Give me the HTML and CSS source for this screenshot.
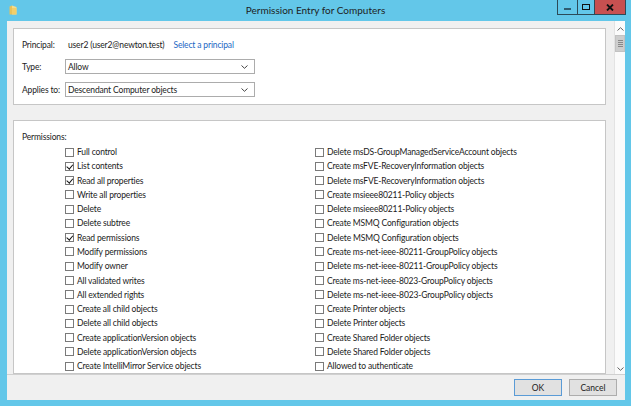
FILE: index.html
```html
<!DOCTYPE html>
<html>
<head>
<meta charset="utf-8">
<link rel="stylesheet" href="styles.css">
</head>
<body>
<div class="window">
  <div class="titlebar">
    <div class="tb-left">
      <svg class="folder" width="8" height="10" viewBox="0 0 8 10"><path d="M0.5 1.5 L3 0.5 L3 9.5 L0.5 9.5 Z" fill="#e8c25a"/><path d="M3 0.5 L7.5 2 L7.5 9.5 L3 9.5 Z" fill="#f6dc8a"/><path d="M3 3 L7.5 3 L7.5 9.5 L3 9.5 Z" fill="#f2cf6a"/></svg>
    </div>
    <div class="title">Permission Entry for Computers</div>
    <div class="controls">
      <div class="cbtn min"><span class="min-bar"></span></div>
      <div class="cbtn max"><span class="max-box"></span></div>
      <div class="cbtn close"><svg width="8" height="7" viewBox="0 0 8 7"><path d="M1 0.5 L7 6.5 M7 0.5 L1 6.5" stroke="#111" stroke-width="1.8"/></svg></div>
    </div>
  </div>
  <div class="client">
    <div class="scrollwrap">
      <div class="content">
        <div class="panel principal-panel">
          <div class="prow prow-first">
            <span class="plabel">Principal:</span>
            <span class="pvalue">user2 (user2@newton.test)</span>
            <span class="plink">Select a principal</span>
          </div>
          <div class="prow prow-type">
            <span class="plabel">Type:</span>
            <div class="select"><span>Allow</span><svg width="7" height="4" viewBox="0 0 7 4"><path d="M0.5 0.5 L3.5 3.3 L6.5 0.5" fill="none" stroke="#444" stroke-width="1"/></svg></div>
          </div>
          <div class="prow prow-applies">
            <span class="plabel">Applies to:</span>
            <div class="select"><span>Descendant Computer objects</span><svg width="7" height="4" viewBox="0 0 7 4"><path d="M0.5 0.5 L3.5 3.3 L6.5 0.5" fill="none" stroke="#444" stroke-width="1"/></svg></div>
          </div>
        </div>
        <div class="panel perms-panel">
          <div class="perms-label">Permissions:</div>
          <div class="perms-grid">
            <div class="col">
              <div class="item"><span class="cb"></span>Full control</div>
              <div class="item"><span class="cb checked"></span>List contents</div>
              <div class="item"><span class="cb checked"></span>Read all properties</div>
              <div class="item"><span class="cb"></span>Write all properties</div>
              <div class="item"><span class="cb"></span>Delete</div>
              <div class="item"><span class="cb"></span>Delete subtree</div>
              <div class="item"><span class="cb checked"></span>Read permissions</div>
              <div class="item"><span class="cb"></span>Modify permissions</div>
              <div class="item"><span class="cb"></span>Modify owner</div>
              <div class="item"><span class="cb"></span>All validated writes</div>
              <div class="item"><span class="cb"></span>All extended rights</div>
              <div class="item"><span class="cb"></span>Create all child objects</div>
              <div class="item"><span class="cb"></span>Delete all child objects</div>
              <div class="item"><span class="cb"></span>Create applicationVersion objects</div>
              <div class="item"><span class="cb"></span>Delete applicationVersion objects</div>
              <div class="item"><span class="cb"></span>Create IntelliMirror Service objects</div>
            </div>
            <div class="col">
              <div class="item"><span class="cb"></span>Delete msDS-GroupManagedServiceAccount objects</div>
              <div class="item"><span class="cb"></span>Create msFVE-RecoveryInformation objects</div>
              <div class="item"><span class="cb"></span>Delete msFVE-RecoveryInformation objects</div>
              <div class="item"><span class="cb"></span>Create msieee80211-Policy objects</div>
              <div class="item"><span class="cb"></span>Delete msieee80211-Policy objects</div>
              <div class="item"><span class="cb"></span>Create MSMQ Configuration objects</div>
              <div class="item"><span class="cb"></span>Delete MSMQ Configuration objects</div>
              <div class="item"><span class="cb"></span>Create ms-net-ieee-80211-GroupPolicy objects</div>
              <div class="item"><span class="cb"></span>Delete ms-net-ieee-80211-GroupPolicy objects</div>
              <div class="item"><span class="cb"></span>Create ms-net-ieee-8023-GroupPolicy objects</div>
              <div class="item"><span class="cb"></span>Delete ms-net-ieee-8023-GroupPolicy objects</div>
              <div class="item"><span class="cb"></span>Create Printer objects</div>
              <div class="item"><span class="cb"></span>Delete Printer objects</div>
              <div class="item"><span class="cb"></span>Create Shared Folder objects</div>
              <div class="item"><span class="cb"></span>Delete Shared Folder objects</div>
              <div class="item"><span class="cb"></span>Allowed to authenticate</div>
            </div>
          </div>
        </div>
      </div>
      <div class="scrollbar">
        <div class="sb-arrow"><svg width="7" height="4" viewBox="0 0 7 4"><path d="M0.5 3.5 L3.5 0.7 L6.5 3.5" fill="none" stroke="#606060" stroke-width="1"/></svg></div>
        <div class="sb-thumb"><span class="grip"></span><span class="grip"></span><span class="grip"></span><span class="grip"></span></div>
        <div class="sb-track"></div>
        <div class="sb-arrow"><svg width="7" height="4" viewBox="0 0 7 4"><path d="M0.5 0.5 L3.5 3.3 L6.5 0.5" fill="none" stroke="#606060" stroke-width="1"/></svg></div>
      </div>
    </div>
    <div class="footer">
      <button class="btn default">OK</button>
      <button class="btn">Cancel</button>
    </div>
  </div>
</div>
</body>
</html>
```
FILE: styles.css
```css
html, body {
  margin: 0;
  padding: 0;
}
body {
  width: 631px;
  height: 406px;
  overflow: hidden;
  font-family: Lato, "Noto Sans", sans-serif;
  font-size: 8.5px;
  letter-spacing: -0.15px;
  color: #1b1b1b;
}
.window {
  height: 406px;
  background: #63c7e9;
  display: flex;
  flex-direction: column;
  box-sizing: border-box;
}
.titlebar {
  height: 21px;
  flex: none;
  display: grid;
  grid-template-columns: 1fr auto 1fr;
}
.tb-left {
  padding: 5px 0 0 9px;
}
.folder {
  display: block;
}
.title {
  font-size: 10px;
  letter-spacing: 0;
  line-height: 21px;
  color: #1e1e1e;
}
.controls {
  justify-self: end;
  display: flex;
  margin-right: 5px;
  height: 15px;
}
.cbtn {
  box-sizing: border-box;
  height: 15px;
  border: 1px solid #2c4a58;
  border-top: none;
  display: flex;
  align-items: center;
  justify-content: center;
}
.cbtn.min {
  width: 20px;
  border-right: none;
}
.cbtn.max {
  width: 18px;
}
.cbtn.close {
  width: 31px;
  border-left: none;
  background: #c75050;
}
.min-bar {
  width: 7px;
  height: 2px;
  background: #2f5c70;
  margin-top: 4px;
}
.max-box {
  width: 6px;
  height: 4px;
  border: 1.5px solid #111;
}
.client {
  flex: 1;
  margin: 0 6px 6px 7px;
  background: #f0f0f0;
  display: flex;
  flex-direction: column;
  min-height: 0;
}
.scrollwrap {
  flex: 1;
  display: flex;
  min-height: 0;
}
.content {
  flex: 1;
  overflow: hidden;
  padding: 7px 8px 0 6px;
  display: flex;
  flex-direction: column;
  gap: 15px;
}
.panel {
  background: #fff;
  border: 1px solid #c6c6c6;
  flex: none;
}
.principal-panel {
  height: 77px;
  box-sizing: border-box;
  padding: 8px 0 0 8px;
}
.prow {
  display: flex;
  align-items: center;
  white-space: nowrap;
}
.prow-first {
  height: 16px;
}
.prow-type {
  margin-top: 6px;
}
.prow-applies {
  margin-top: 8px;
}
.plabel {
  width: 43px;
  flex: none;
}
.pvalue {
  margin-left: 3px;
}
.plink {
  margin-left: 9px;
  color: #1a66c4;
}
.select {
  box-sizing: border-box;
  width: 190px;
  height: 15px;
  border: 1px solid #acacac;
  background: #fff;
  display: flex;
  align-items: center;
  justify-content: space-between;
  padding: 0 6px 0 2px;
}
.select svg {
  display: block;
}
.perms-panel {
  padding: 9px 8px 0 8px;
}
.perms-label {
  line-height: 15px;
}
.perms-grid {
  display: grid;
  grid-template-columns: 250px 1fr;
  padding-left: 43px;
}
.item {
  height: 14.27px;
  display: flex;
  align-items: center;
  white-space: nowrap;
}
.cb {
  box-sizing: border-box;
  width: 9px;
  height: 9px;
  border: 1px solid #7a7a7a;
  background: #fff;
  margin-right: 3px;
  flex: none;
  position: relative;
}
.cb.checked::after {
  content: "";
  position: absolute;
  left: 1.5px;
  top: 0px;
  width: 2.5px;
  height: 4.5px;
  border: solid #111;
  border-width: 0 1.5px 1.5px 0;
  transform: rotate(40deg);
}
.scrollbar {
  width: 11px;
  flex: none;
  box-sizing: border-box;
  border-left: 1px solid #e3e3e3;
  background: #fbfbfb;
  display: flex;
  flex-direction: column;
  align-items: center;
  padding-top: 3px;
}
.sb-arrow {
  height: 10px;
  width: 10px;
  display: flex;
  align-items: center;
  justify-content: center;
}
.sb-thumb {
  margin-top: 1px;
  box-sizing: border-box;
  width: 10px;
  height: 17px;
  background: #cdcdcd;
  border: 1px solid #c2c2c2;
  display: flex;
  flex-direction: column;
  align-items: center;
  justify-content: center;
  gap: 1px;
}
.grip {
  width: 5px;
  height: 1px;
  background: #888;
}
.sb-track {
  flex: 1;
}
.footer {
  height: 26px;
  flex: none;
  box-sizing: border-box;
  border-top: 1px solid #d0d0d0;
  display: flex;
  justify-content: flex-end;
  align-items: center;
  gap: 7px;
  padding-right: 8px;
}
.btn {
  box-sizing: border-box;
  width: 48px;
  height: 17px;
  border: 1px solid #adadad;
  background: #e1e1e1;
  font-family: Lato, "Noto Sans", sans-serif;
  font-size: 8.5px;
  color: #1b1b1b;
  padding: 0;
}
.btn.default {
  border-color: #5a9bd6;
}
```
